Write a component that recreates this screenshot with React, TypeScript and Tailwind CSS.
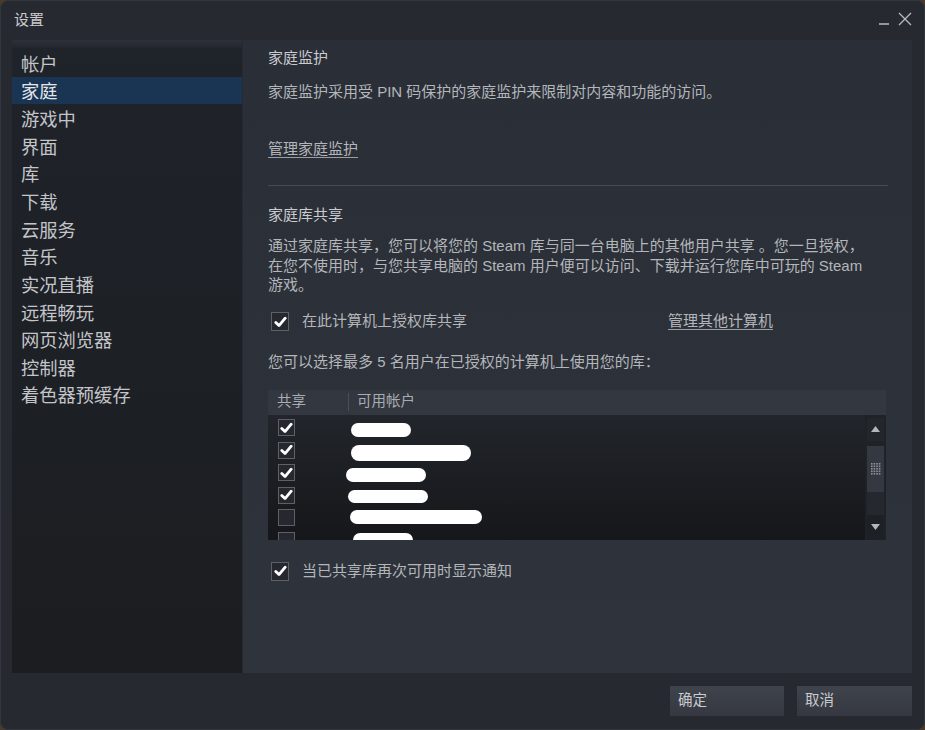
import React from 'react'

const font = { fontFamily: '"Liberation Sans", "Noto Sans CJK SC", sans-serif' }

const navItems = ['帐户', '家庭', '游戏中', '界面', '库', '下载', '云服务', '音乐', '实况直播', '远程畅玩', '网页浏览器', '控制器', '着色器预缓存']

function Check({ checked, big }: { checked: boolean; big?: boolean }) {
  return (
    <div
      className={
        (big ? 'w-[18px] h-[19px] ' : 'w-[17px] h-[17px] ') +
        'shrink-0 border border-[#5d6067] bg-[#25282e] flex items-center justify-center'
      }
    >
      {checked && (
        <svg width="13" height="12" viewBox="0 0 13 12">
          <path d="M1.8 6.4 L5 9.6 L11.2 2.2" fill="none" stroke="#ffffff" strokeWidth="2.8" strokeLinecap="round" strokeLinejoin="round" />
        </svg>
      )}
    </div>
  )
}

const rows = [
  { checked: true, left: 83, width: 60, top: -5, h: 14 },
  { checked: true, left: 83, width: 120, top: -5, h: 16 },
  { checked: true, left: 78, width: 80, top: -5, h: 14 },
  { checked: true, left: 80, width: 80, top: -5, h: 13 },
  { checked: false, left: 82, width: 132, top: -8, h: 14 },
  { checked: false, left: 85, width: 60, top: -7, h: 14 },
]

export default function App() {
  return (
    <div className="w-[925px] h-[730px] bg-[#4a3a2a]" style={font}>
      <div className="w-[925px] h-[730px] rounded-[8px] overflow-hidden bg-[#262930] border border-[#33363d] flex flex-col">
        {/* title bar */}
        <div className="h-[39px] shrink-0 flex items-center justify-between pl-[13px] pr-[12px]">
          <span className="text-[15px] text-[#c9cbcf]">设置</span>
          <div className="flex items-center gap-[8px] mt-[-4px]">
            <svg width="12" height="14" viewBox="0 0 12 14">
              <line x1="1" y1="12" x2="11" y2="12" stroke="#b9bbbf" strokeWidth="1.3" />
            </svg>
            <svg width="14" height="14" viewBox="0 0 14 14">
              <path d="M1 1 L13 13 M13 1 L1 13" stroke="#b9bbbf" strokeWidth="1.3" />
            </svg>
          </div>
        </div>

        {/* body */}
        <div className="h-[633px] shrink-0 flex pl-[11px] pr-[12px] gap-[1px]">
          {/* sidebar */}
          <div className="w-[230px] shrink-0 flex flex-col bg-gradient-to-b from-[#1f232a] to-[#1b1d20]">
            <div className="h-[8px] bg-gradient-to-b from-[#2c3038] to-[#23262d]" />
            <div className="flex flex-col pt-[1px]">
              {navItems.map(item => (
                <div
                  key={item}
                  className={
                    'h-[27.67px] flex items-center pl-[9px] pt-[3px] text-[18.3px] ' +
                    (item === '家庭' ? 'bg-[#1a3553] text-[#e4e6e9]' : 'text-[#c3c5c9]')
                  }
                >
                  {item}
                </div>
              ))}
            </div>
          </div>

          {/* content */}
          <div className="flex-1 bg-gradient-to-b from-[#2a2e36] to-[#2f333b] pl-[25px] pr-[25px] pt-[8px] flex flex-col text-[15px]">
            <div className="h-[20px] leading-[20px] text-[#c9cbcf]">家庭监护</div>
            <div className="mt-[14px] h-[20px] leading-[20px] text-[#b3b6ba] whitespace-nowrap">
              家庭监护采用受 PIN 码保护的家庭监护来限制对内容和功能的访问。
            </div>
            <div className="mt-[37px] h-[20px] leading-[20px] text-[#b3b6ba]">
              <span className="underline underline-offset-[3px] decoration-[#9a9da2]">管理家庭监护</span>
            </div>
            <div className="mt-[26px] h-[1px] bg-[#464a51] mr-[-1px]" />
            <div className="mt-[19px] h-[20px] leading-[20px] text-[#c9cbcf]">家庭库共享</div>
            <div className="mt-[11px] leading-[19.5px] text-[#b3b6ba] whitespace-nowrap">
              通过家庭库共享，您可以将您的 Steam 库与同一台电脑上的其他用户共享 。您一旦授权，
              <br />
              在您不使用时，与您共享电脑的 Steam 用户便可以访问、下载并运行您库中可玩的 Steam
              <br />
              游戏。
            </div>

            <div className="mt-[17px] h-[20px] flex items-center">
              <div className="ml-[3px]">
                <Check checked big />
              </div>
              <span className="ml-[13px] w-[366px] shrink-0 text-[#b3b6ba]">在此计算机上授权库共享</span>
              <span className="text-[#b3b6ba] underline underline-offset-[3px] decoration-[#9a9da2]">管理其他计算机</span>
            </div>

            <div className="mt-[20px] h-[20px] leading-[20px] text-[#b3b6ba] whitespace-nowrap">
              您可以选择最多 5 名用户在已授权的计算机上使用您的库：
            </div>

            {/* table */}
            <div className="mt-[18px] h-[150px] shrink-0 mr-[1px] flex flex-col overflow-hidden">
              <div className="h-[25px] shrink-0 bg-[#33373f] flex items-center text-[14.5px] text-[#a9acb1]">
                <span className="pl-[9px] w-[80px]">共享</span>
                <div className="w-[1px] h-[18px] bg-[#4a4e55]" />
                <span className="pl-[8px]">可用帐户</span>
              </div>
              <div className="h-[125px] shrink-0 flex bg-gradient-to-b from-[#22252b] to-[#15171a]">
                <div className="flex-1 flex flex-col pt-[2px] overflow-hidden">
                  {rows.map((r, i) => (
                    <div key={i} className="h-[22.5px] shrink-0 flex items-center relative">
                      <div className="ml-[10px]">
                        <Check checked={r.checked} />
                      </div>
                      <div
                        className="absolute bg-white rounded-full"
                        style={{ left: r.left, width: r.width, top: 11 + r.top, height: r.h }}
                      />
                    </div>
                  ))}
                </div>
                {/* scrollbar */}
                <div className="w-[21px] shrink-0 bg-[#1f2227] flex flex-col items-center pt-[3px]">
                  <div className="w-[17px] h-[23px] shrink-0 bg-[#23262b] flex items-center justify-center">
                    <svg width="9" height="6" viewBox="0 0 9 6">
                      <path d="M4.5 0 L9 6 L0 6 Z" fill="#b4b7bb" />
                    </svg>
                  </div>
                  <div className="mt-[5px] w-[17px] h-[46px] shrink-0 bg-[#343840] flex items-center justify-center">
                    <svg width="10" height="12" viewBox="0 0 10 12">
                      {[0, 1, 2, 3].map(c =>
                        [0, 1, 2, 3, 4].map(rr => (
                          <rect key={c + '-' + rr} x={c * 2.6} y={rr * 2.5} width="1.6" height="1.6" fill="#8d9096" />
                        ))
                      )}
                    </svg>
                  </div>
                  <div className="flex-1 w-[17px] bg-[#25282e]" />
                  <div className="w-[17px] h-[25px] shrink-0 bg-[#1d2024] flex items-center justify-center">
                    <svg width="9" height="6" viewBox="0 0 9 6">
                      <path d="M0 0 L9 0 L4.5 6 Z" fill="#b4b7bb" />
                    </svg>
                  </div>
                </div>
              </div>
            </div>

            <div className="mt-[22px] h-[19px] flex items-center">
              <div className="ml-[3px]">
                <Check checked big />
              </div>
              <span className="ml-[13px] text-[#b3b6ba]">当已共享库再次可用时显示通知</span>
            </div>
          </div>
        </div>

        {/* footer */}
        <div className="flex-1 flex justify-end items-start pt-[13px] pr-[12px] gap-[13px]">
          <button className="w-[114px] h-[30px] bg-gradient-to-b from-[#3f434c] to-[#353840] text-left pl-[8px] text-[14.5px] text-[#c9cbcf]">
            确定
          </button>
          <button className="w-[115px] h-[30px] bg-gradient-to-b from-[#3f434c] to-[#353840] text-left pl-[8px] text-[14.5px] text-[#c9cbcf]">
            取消
          </button>
        </div>
      </div>
    </div>
  )
}
